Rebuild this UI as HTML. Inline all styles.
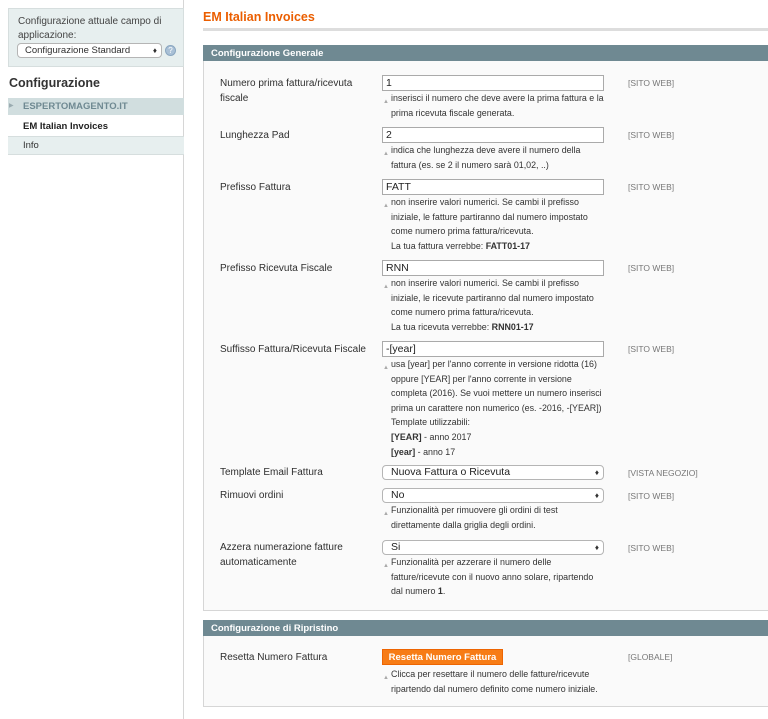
<!DOCTYPE html>
<html><head><meta charset="utf-8"><style>
*{margin:0;padding:0;box-sizing:border-box}
body{width:768px;height:719px;background:#fff;font-family:"Liberation Sans",Arial,sans-serif;color:#2f2f2f;position:relative;overflow:hidden;font-size:10px}
.a{position:absolute;white-space:nowrap}
.side{position:absolute;left:0;top:0;width:184px;height:719px;border-right:1px solid #d6d6d6}
.lbl{position:absolute;left:220px;font-size:10px;line-height:15px;color:#2f2f2f}
.inp{position:absolute;left:382px;width:222px;height:16px;border:1px solid #aaa;background:#fff;font-size:10.5px;line-height:15px;padding-left:3px;color:#222}
.sel{position:absolute;left:382px;width:222px;height:15px;border:1px solid #b5b5b5;border-radius:4px;background:#fff;font-size:10.5px;line-height:13px;padding-left:8px;color:#222}
.sel:after{content:"\2666";position:absolute;right:4px;top:0;font-size:8px;color:#333}
.sc{position:absolute;left:628px;font-size:8.5px;color:#777;line-height:12px}
.note{position:absolute;left:382px;font-size:8.9px;line-height:14.6px;color:#333;white-space:nowrap}
.note p{padding-left:9px}
.note p:first-child:before{content:"\25B2";position:absolute;left:1px;font-size:6px;color:#aaa;top:4px}
.hd{position:absolute;left:203px;width:570px;height:16px;background:#6f8992;color:#fff;font-weight:bold;font-size:9.5px;line-height:17px;padding-left:8px}
.fs{position:absolute;left:203px;width:570px;background:#fafafa;border:1px solid #d6d6d6;border-top:none}
</style></head><body>
<div class="side">
<div class="a" style="left:8px;top:8px;width:176px;height:59px;background:#e7efef;border:1px solid #d6dede"></div>
<div class="a" style="left:18px;top:15px;font-size:10px;line-height:14px;color:#444;white-space:normal;width:150px">Configurazione attuale campo di applicazione:</div>
<div class="a" style="left:17px;top:43px;width:145px;height:15px;border:1px solid #b5b5b5;border-radius:4px;background:#fff;font-size:9.5px;line-height:13px;padding-left:7px">Configurazione Standard<span style="position:absolute;right:4px;font-size:8px">&#9830;</span></div>
<div class="a" style="left:165px;top:45px;width:11px;height:11px;border-radius:50%;background:#a9c0d6;border:1px solid #8aa6c0;color:#fff;font-size:8px;line-height:9px;text-align:center">?</div>
<div class="a" style="left:9px;top:76px;font-size:12.5px;font-weight:bold;color:#333">Configurazione</div>
<div class="a" style="left:8px;top:98px;width:176px;height:17px;background:#d1dedf"></div>
<div class="a" style="left:9px;top:102px;font-size:6px;color:#9aabb0">&#9654;</div>
<div class="a" style="left:23px;top:101px;font-size:9.5px;font-weight:bold;color:#6f8992">ESPERTOMAGENTO.IT</div>
<div class="a" style="left:23px;top:121px;font-size:9.5px;font-weight:bold;color:#222">EM Italian Invoices</div>
<div class="a" style="left:8px;top:136px;width:176px;height:19px;background:#e7efef;border-top:1px solid #d6dede;border-bottom:1px solid #d6dede"></div>
<div class="a" style="left:23px;top:140px;font-size:9.5px;color:#333">Info</div>
</div>
<div class="a" style="left:203px;top:10px;font-size:12.5px;font-weight:bold;color:#eb5e00">EM Italian Invoices</div>
<div class="a" style="left:203px;top:28px;width:570px;height:3px;background:#ddd"></div>

<div class="hd" style="top:45px">Configurazione Generale</div>
<div class="fs" style="top:61px;height:550px"></div>

<div class="lbl" style="top:76px">Numero prima fattura/ricevuta<br>fiscale</div>
<div class="inp" style="top:75px">1</div><div class="sc" style="top:77px">[SITO WEB]</div>
<div class="note" style="top:91px"><p>inserisci il numero che deve avere la prima fattura e la</p><p>prima ricevuta fiscale generata.</p></div>

<div class="lbl" style="top:128px">Lunghezza Pad</div>
<div class="inp" style="top:127px">2</div><div class="sc" style="top:129px">[SITO WEB]</div>
<div class="note" style="top:143px"><p>indica che lunghezza deve avere il numero della</p><p>fattura (es. se 2 il numero sarà 01,02, ..)</p></div>

<div class="lbl" style="top:180px">Prefisso Fattura</div>
<div class="inp" style="top:179px">FATT</div><div class="sc" style="top:181px">[SITO WEB]</div>
<div class="note" style="top:195px"><p>non inserire valori numerici. Se cambi il prefisso</p><p>iniziale, le fatture partiranno dal numero impostato</p><p>come numero prima fattura/ricevuta.</p><p>La tua fattura verrebbe: <b>FATT01-17</b></p></div>

<div class="lbl" style="top:261px">Prefisso Ricevuta Fiscale</div>
<div class="inp" style="top:260px">RNN</div><div class="sc" style="top:262px">[SITO WEB]</div>
<div class="note" style="top:276px"><p>non inserire valori numerici. Se cambi il prefisso</p><p>iniziale, le ricevute partiranno dal numero impostato</p><p>come numero prima fattura/ricevuta.</p><p>La tua ricevuta verrebbe: <b>RNN01-17</b></p></div>

<div class="lbl" style="top:342px">Suffisso Fattura/Ricevuta Fiscale</div>
<div class="inp" style="top:341px">-[year]</div><div class="sc" style="top:343px">[SITO WEB]</div>
<div class="note" style="top:357px"><p>usa [year] per l'anno corrente in versione ridotta (16)</p><p>oppure [YEAR] per l'anno corrente in versione</p><p>completa (2016). Se vuoi mettere un numero inserisci</p><p>prima un carattere non numerico (es. -2016, -[YEAR])</p><p>Template utilizzabili:</p><p><b>[YEAR]</b> - anno 2017</p><p><b>[year]</b> - anno 17</p></div>

<div class="lbl" style="top:465px">Template Email Fattura</div>
<div class="sel" style="top:465px">Nuova Fattura o Ricevuta</div><div class="sc" style="top:467px">[VISTA NEGOZIO]</div>

<div class="lbl" style="top:488px">Rimuovi ordini</div>
<div class="sel" style="top:488px">No</div><div class="sc" style="top:490px">[SITO WEB]</div>
<div class="note" style="top:503px"><p>Funzionalità per rimuovere gli ordini di test</p><p>direttamente dalla griglia degli ordini.</p></div>

<div class="lbl" style="top:540px">Azzera numerazione fatture<br>automaticamente</div>
<div class="sel" style="top:540px">Si</div><div class="sc" style="top:542px">[SITO WEB]</div>
<div class="note" style="top:555px"><p>Funzionalità per azzerare il numero delle</p><p>fatture/ricevute con il nuovo anno solare, ripartendo</p><p>dal numero <b>1</b>.</p></div>

<div class="hd" style="top:620px">Configurazione di Ripristino</div>
<div class="fs" style="top:636px;height:71px"></div>
<div class="lbl" style="top:650px">Resetta Numero Fattura</div>
<div class="a" style="left:382px;top:649px;width:121px;height:16px;background:#f77c16;border:1px solid #ed6502;color:#fff;font-weight:bold;font-size:9.5px;line-height:15px;text-align:center">Resetta Numero Fattura</div>
<div class="sc" style="top:651px">[GLOBALE]</div>
<div class="note" style="top:667px"><p>Clicca per resettare il numero delle fatture/ricevute</p><p>ripartendo dal numero definito come numero iniziale.</p></div>
</body></html>
